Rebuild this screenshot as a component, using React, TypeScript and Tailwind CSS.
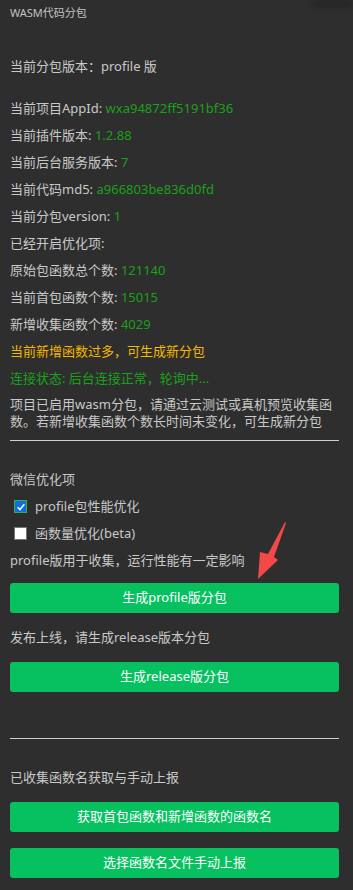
import { useState } from 'react';

const infoRows = [
  { label: '当前项目AppId: ', value: 'wxa94872ff5191bf36' },
  { label: '当前插件版本: ', value: '1.2.88' },
  { label: '当前后台服务版本: ', value: '7' },
  { label: '当前代码md5: ', value: 'a966803be836d0fd' },
  { label: '当前分包version: ', value: '1' },
  { label: '已经开启优化项: ', value: '' },
  { label: '原始包函数总个数: ', value: '121140' },
  { label: '当前首包函数个数: ', value: '15015' },
  { label: '新增收集函数个数: ', value: '4029' },
];

function Row({ children, className = '' }: { children: React.ReactNode; className?: string }) {
  return <div className={'h-[27px] flex items-center whitespace-nowrap ' + className}>{children}</div>;
}

function GreenButton({ label, className = '' }: { label: string; className?: string }) {
  return (
    <button className={'w-full h-[30px] rounded-[3px] bg-[#07c160] text-white text-[13px] font-normal ' + className}>
      {label}
    </button>
  );
}

function Check({ checked, onToggle, label }: { checked: boolean; onToggle: () => void; label: string }) {
  return (
    <Row>
      <label className="flex items-center gap-[8px] pl-[4px] cursor-pointer" onClick={onToggle}>
        {checked ? (
          <span className="w-[13px] h-[13px] bg-[#0b6ee8] border border-[#3fae3f] flex items-center justify-center">
            <svg viewBox="0 0 12 12" className="w-[10px] h-[10px]">
              <path d="M2 6.3 L4.8 9 L10 2.8" fill="none" stroke="white" strokeWidth="1.9" />
            </svg>
          </span>
        ) : (
          <span className="w-[13px] h-[13px] bg-white border border-[#767676]" />
        )}
        <span>{label}</span>
      </label>
    </Row>
  );
}

export default function App() {
  const [profileOpt, setProfileOpt] = useState(true);
  const [countOpt, setCountOpt] = useState(false);

  return (
    <div
      className="min-h-screen bg-[#2e2e2e] text-[#c9c9c9] text-[13px] relative"
      style={{ fontFamily: '"Noto Sans", "Noto Sans CJK SC", sans-serif' }}
    >
      <div className="absolute top-0 right-0 w-[40px] h-[8px] bg-[#262626] blur-[3px]" />
      <div className="pl-[10px] w-[339px]">
        {/* Title */}
        <div className="h-[26px] flex items-center text-[11px] text-[#c2c2c2]">WASM代码分包</div>

        <Row className="mt-[27px]">当前分包版本：profile 版</Row>

        {/* Info */}
        <div className="mt-[15px]">
          {infoRows.map((r) => (
            <Row key={r.label}>
              <span>{r.label}</span>
              {r.value && <span className="text-[#1aa01a]">&nbsp;{r.value}</span>}
            </Row>
          ))}
          <Row className="text-[#f5b700]">当前新增函数过多，可生成新分包</Row>
          <Row className="text-[#1aa01a]">连接状态: 后台连接正常，轮询中...</Row>
        </div>

        <p className="mt-[4px] leading-[17px]">
          项目已启用wasm分包，请通过云测试或真机预览收集函数。若新增收集函数个数长时间未变化，可生成新分包
        </p>

        <div className="mt-[10px] border-t border-[#cfcfcf]" />

        {/* WeChat options */}
        <Row className="mt-[25px]">微信优化项</Row>
        <Check checked={profileOpt} onToggle={() => setProfileOpt(!profileOpt)} label="profile包性能优化" />
        <Check checked={countOpt} onToggle={() => setCountOpt(!countOpt)} label="函数量优化(beta)" />
        <Row>profile版用于收集，运行性能有一定影响</Row>

        <div className="relative">
          <GreenButton label="生成profile版分包" className="mt-[9px]" />
          {/* red annotation arrow */}
          <svg className="absolute left-[230px] top-[-64px] w-[60px] h-[80px]" viewBox="0 0 60 80">
            <path d="M45 12 L46 13 L34 47 L38 50 L18 69 L20 42 L28 44 Z" fill="#f24848" />
          </svg>
        </div>

        <Row className="mt-[11px]">发布上线，请生成release版本分包</Row>
        <GreenButton label="生成release版分包" className="mt-[11px]" />

        <div className="mt-[46px] border-t border-[#cfcfcf]" />

        <Row className="mt-[25px]">已收集函数名获取与手动上报</Row>
        <GreenButton label="获取首包函数和新增函数的函数名" className="mt-[11px]" />
        <GreenButton label="选择函数名文件手动上报" className="mt-[16px]" />
        <div className="h-[12px]" />
      </div>
    </div>
  );
}
